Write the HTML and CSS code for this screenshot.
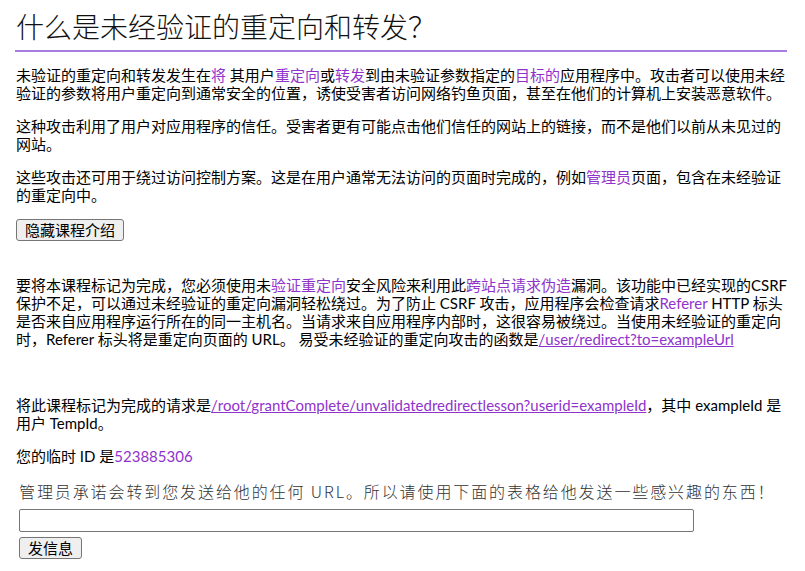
FILE: index.html
```html
<!DOCTYPE html>
<html lang="zh-CN">
<head>
<meta charset="utf-8">
<title>未经验证的重定向和转发</title>
<link rel="stylesheet" href="styles.css">
</head>
<body>
<div class="page">
  <h1 class="title">什么是未经验证的重定向和转发？</h1>
  <div class="intro">
    <p class="para">未验证的重定向和转发发生在<a class="lnk" href="#">将</a> 其用户<a class="lnk" href="#">重定向</a>或<a class="lnk" href="#">转发</a>到由未验证参数指定的<a class="lnk" href="#">目标的</a>应用程序中。攻击者可以使用未经验证的参数将用户重定向到通常安全的位置，诱使受害者访问网络钓鱼页面，甚至在他们的计算机上安装恶意软件。</p>
    <p class="para">这种攻击利用了用户对应用程序的信任。受害者更有可能点击他们信任的网站上的链接，而不是他们以前从未见过的网站。</p>
    <p class="para">这些攻击还可用于绕过访问控制方案。这是在用户通常无法访问的页面时完成的，例如<a class="lnk" href="#">管理员</a>页面，包含在未经验证的重定向中。</p>
    <button class="btn intro-btn" type="button">隐藏课程介绍</button>
  </div>
  <div class="lesson">
    <p class="para task">要将本课程标记为完成，您必须使用未<a class="lnk" href="#">验证重定向</a>安全风险来利用此<a class="lnk" href="#">跨站点请求伪造</a>漏洞。该功能中已经实现的CSRF 保护不足，可以通过未经验证的重定向漏洞轻松绕过。为了防止 CSRF 攻击，应用程序会检查请求<a class="lnk" href="#">Referer</a> HTTP 标头是否来自应用程序运行所在的同一主机名。当请求来自应用程序内部时，这很容易被绕过。当使用未经验证的重定向时，Referer 标头将是重定向页面的 URL。 易受未经验证的重定向攻击的函数是<a class="lnk ul" href="#">/user/redirect?to=exampleUrl</a></p>
    <p class="para request">将此课程标记为完成的请求是<a class="lnk ul" href="#">/root/grantComplete/unvalidatedredirectlesson?userid=exampleId</a>，其中 exampleId 是用户 TempId。</p>
    <p class="para">您的临时 ID 是<span class="lnk">523885306</span></p>
    <form class="mail">
      <p class="note">管理员承诺会转到您发送给他的任何 URL。所以请使用下面的表格给他发送一些感兴趣的东西！</p>
      <input class="field" type="text">
      <div class="row"><button class="btn" type="button">发信息</button></div>
    </form>
  </div>
</div>
</body>
</html>
```
FILE: styles.css
```css
html, body {
  margin: 0;
  padding: 0;
  background: #ffffff;
}

.page {
  width: 773px;
  padding: 0 16px 0 15px;
  font-family: Lato, "Noto Sans CJK SC", sans-serif;
  font-size: 15px;
  line-height: 18px;
  color: #000000;
}

.title {
  width: 771px;
  margin: 0;
  padding: 8px 0 6px 1px;
  font-family: "Noto Sans CJK SC", serif;
  font-size: 28px;
  line-height: 36px;
  font-weight: 300;
  color: #111111;
  border-bottom: 2px solid #a87de2;
}

.intro {
  padding-left: 1px;
  padding-top: 14px;
}

.lesson {
  padding-left: 1px;
}

.para {
  margin: 0 0 15px 0;
}

.lnk {
  color: #9033cc;
  text-decoration: none;
}

.ul {
  text-decoration: underline;
}

.btn {
  font-family: Lato, "Noto Sans CJK SC", sans-serif;
  font-size: 15px;
  line-height: 18px;
  height: 22px;
  box-sizing: border-box;
  padding: 0 8px;
  margin: 0;
  background: #efefef;
  color: #000;
  border: 1px solid #767676;
  border-radius: 3px;
  display: block;
}

.intro-btn {
  margin-top: 2px;
}

.task {
  margin-top: 35px;
}

.request {
  margin-top: 48px;
}

.mail {
  margin: 0;
  padding-left: 3px;
}

.note {
  margin: 0;
  font-family: "Noto Sans CJK SC", serif;
  font-size: 16px;
  line-height: 22px;
  letter-spacing: 1.9px;
  font-weight: 300;
  color: #333333;
}

.field {
  display: block;
  box-sizing: border-box;
  width: 675px;
  height: 23px;
  margin: 7px 0 5px 0;
  padding: 1px 2px;
  border: 1px solid #767676;
  border-radius: 2px;
  font-size: 13px;
}

.row {
  display: flex;
}
```
